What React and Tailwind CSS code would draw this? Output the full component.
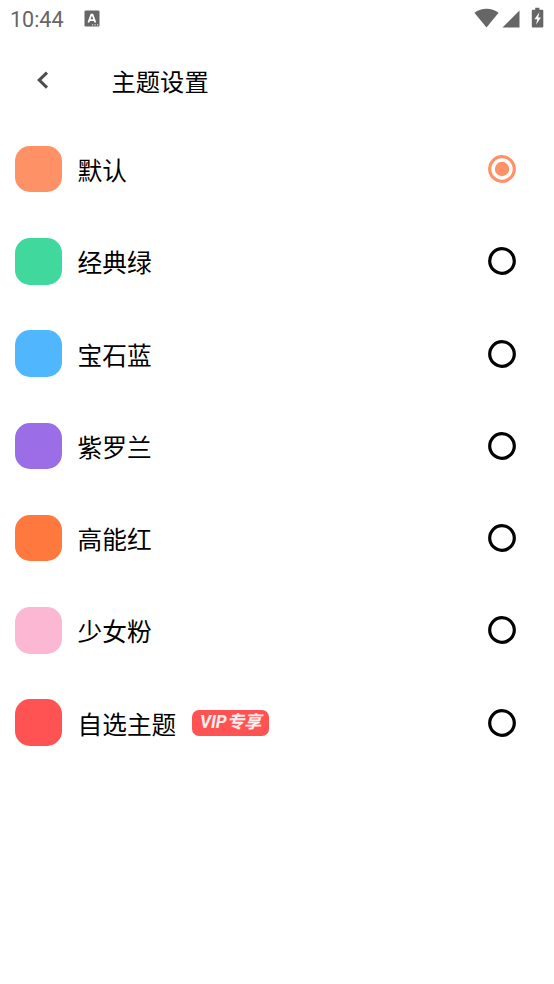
const THEMES = [
  { id: 'default', name: '默认', swatch: 'bg-[#ff9166]' },
  { id: 'green', name: '经典绿', swatch: 'bg-[#41d89d]' },
  { id: 'blue', name: '宝石蓝', swatch: 'bg-[#50b7ff]' },
  { id: 'violet', name: '紫罗兰', swatch: 'bg-[#9b6de6]' },
  { id: 'red', name: '高能红', swatch: 'bg-[#ff783e]' },
  { id: 'pink', name: '少女粉', swatch: 'bg-[#fcb8d2]' },
  { id: 'custom', name: '自选主题', swatch: 'bg-[#ff5252]', vip: true },
]

function StatusBar() {
  return (
    <div className="flex h-10 items-start justify-between pl-[10px] pr-[10px] text-[#666]">
      <div className="flex items-start">
        <span className="w-[54px] pt-[8px] font-['Roboto',sans-serif] text-[21.5px] leading-[24px]">10:44</span>
        <svg className="ml-[19.5px] mt-[10px] h-[17px] w-[16px]" viewBox="0 0 16 17">
          <rect x="0.5" y="0.5" width="15" height="16" rx="1.2" fill="currentColor" />
          <path d="M4.4 12.5 7.3 4.6h1.2l2.9 7.9M5.6 10.2h4.6" fill="none" stroke="#fff" strokeWidth="1.8" />
          <path d="M8 14.9h1.2M10.5 14.9h1.2M13 14.9h1.2" stroke="#fff" strokeWidth="1" />
        </svg>
      </div>
      <div className="flex items-start">
        <svg className="mt-[8px] h-[20px] w-[25px]" viewBox="0 0 25 20">
          <path d="M0.4 4.8C7.5-.7 17.5-.7 24.6 4.8L12.5 19.5Z" fill="currentColor" />
        </svg>
        <svg className="ml-[3px] mt-[10px] h-[18px] w-[18px]" viewBox="0 0 18 18">
          <path d="M17.5 0.5v17H0.5Z" fill="currentColor" />
        </svg>
        <svg className="ml-[11px] mt-[7px] h-[21px] w-[13px]" viewBox="0 0 13 21">
          <path d="M4.2 0.8h4.2v1.9h3q.9 0 .9.9v16q0 .9-.9.9H1.7q-.9 0-.9-.9v-16q0-.9.9-.9h2.5Z" fill="currentColor" />
          <path d="M8.4 5.2 3.4 12.2h2.9L5 17.8l4.9-7.4H7.2Z" fill="#fff" />
        </svg>
      </div>
    </div>
  )
}

function Header() {
  return (
    <header className="flex h-[83px] items-start">
      <button className="ml-[36px] mt-[31px]" aria-label="返回">
        <svg className="h-[18px] w-[13px]" viewBox="0 0 13 18">
          <path d="M11 1.6 3.2 9.1l7.8 7.5" fill="none" stroke="#4d4d4d" strokeWidth="3" />
        </svg>
      </button>
      <h1 className="ml-[62.5px] mt-[23px] text-[24.3px] leading-[36px]">主题设置</h1>
    </header>
  )
}

function Radio({ checked }) {
  const color = checked ? 'text-[#ff9166]' : 'text-black'
  return (
    <svg className={`h-7 w-7 ${color}`} viewBox="0 0 28 28">
      <circle cx="14" cy="14" r="12.3" fill="none" stroke="currentColor" strokeWidth="3.2" />
      {checked && <circle cx="14" cy="14" r="7.2" fill="currentColor" />}
    </svg>
  )
}

function ThemeRow({ theme, checked }) {
  return (
    <li className="flex h-[92.25px] items-center pl-[15px] pr-[38.5px]">
      <div className={`h-[46.5px] w-[46.5px] rounded-[15px] ${theme.swatch}`} />
      <span className="ml-[16px] text-[24.7px] leading-[36px]">{theme.name}</span>
      {theme.vip && (
        <span className="ml-[15.7px] flex h-[26px] w-[77.5px] items-center justify-center rounded-[7px] bg-[#ff5252] pb-px font-['Roboto','Noto_Sans_CJK_SC',sans-serif] text-[17.4px] font-bold italic text-white/90">
          VIP专享
        </span>
      )}
      <div className="ml-auto">
        <Radio checked={checked} />
      </div>
    </li>
  )
}

export default function App() {
  return (
    <div className="h-[984px] w-[554px] overflow-hidden bg-white font-['Noto_Sans_CJK_SC',sans-serif] text-black">
      <StatusBar />
      <Header />
      <ul>
        {THEMES.map((theme) => (
          <ThemeRow key={theme.id} theme={theme} checked={theme.id === 'default'} />
        ))}
      </ul>
    </div>
  )
}
